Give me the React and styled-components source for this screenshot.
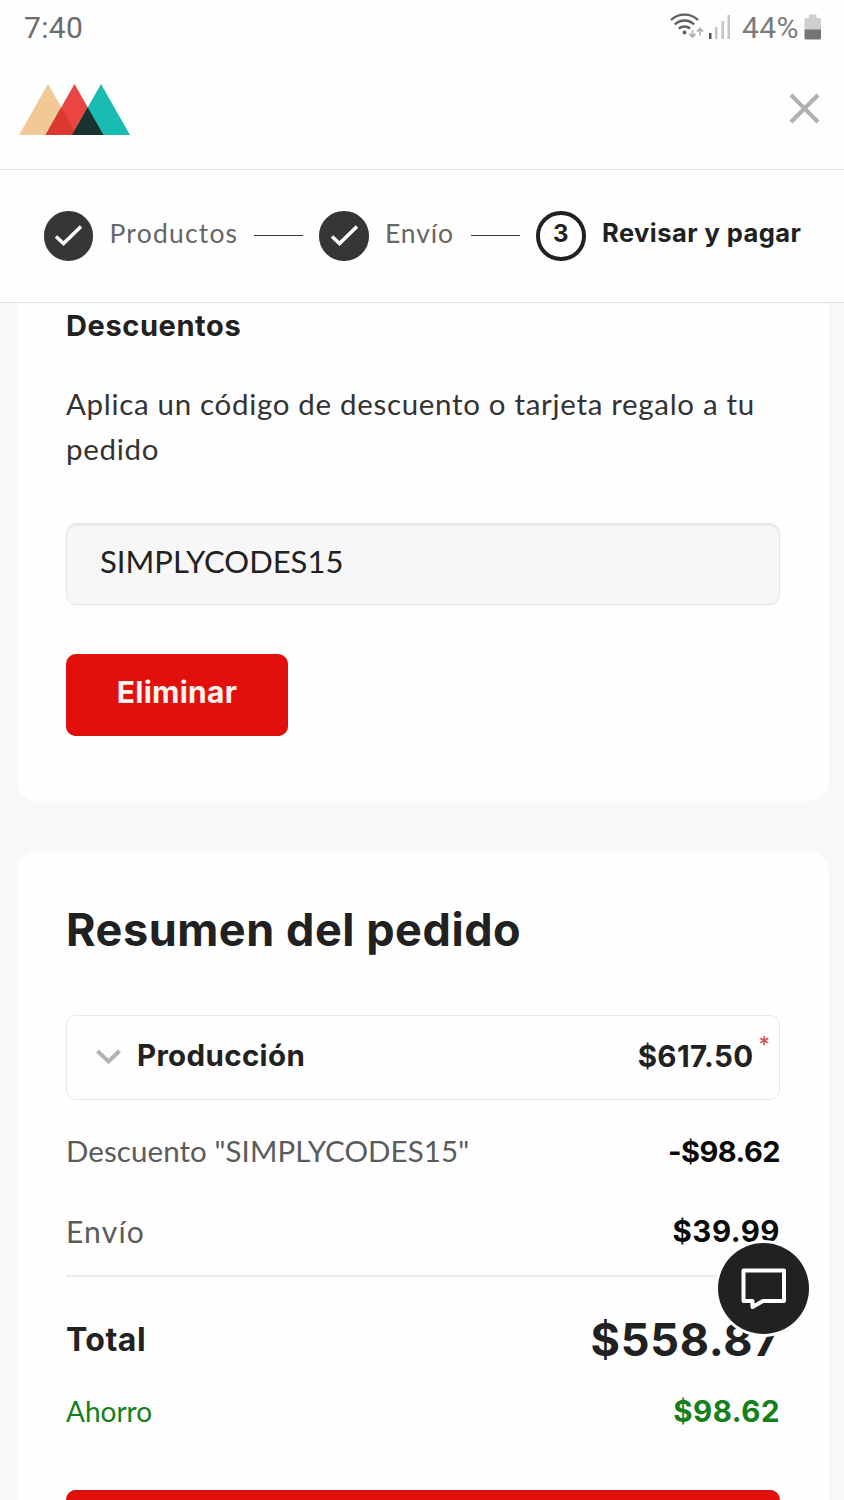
import React, { useState } from 'react';
import styled, { createGlobalStyle } from 'styled-components';

const headingFont = "Inter, 'Liberation Sans', sans-serif";

const GlobalStyle = createGlobalStyle`
    * {
        box-sizing: border-box;
    }

    body {
        margin: 0;
        background: #f8f8f8;
        color: #212121;
        font-family: Lato, 'Liberation Sans', sans-serif;
        overflow: hidden;
    }
`;

const Page = styled.div`
    width: 844px;
    height: 1500px;
    display: flex;
    flex-direction: column;
    overflow: hidden;
`;

// Phone status bar
const StatusBar = styled.div`
    height: 54px;
    flex-shrink: 0;
    padding: 0 22px 0 24px;
    display: flex;
    align-items: center;
    justify-content: space-between;
    background: #fefefe;
    color: #6c6c6c;
    font-family: Roboto, sans-serif;
    font-size: 30px;
    letter-spacing: 0.3px;
`;

const StatusIcons = styled.div`
    display: flex;
    align-items: center;
    color: #7b7b7b;

    svg {
        display: block;
    }
`;

const BatteryText = styled.span`
    margin: 0 5px 0 10px;
    letter-spacing: 0.4px;
`;

const Header = styled.header`
    height: 116px;
    flex-shrink: 0;
    padding: 0 24px 6px 18px;
    display: flex;
    align-items: center;
    justify-content: space-between;
    background: #fefefe;
    border-bottom: 1px solid #e3e3e3;
`;

const IconButton = styled.button`
    padding: 0;
    border: 0;
    background: none;
    line-height: 0;
`;

// Checkout steps
const Steps = styled.nav`
    height: 133px;
    flex-shrink: 0;
    padding-left: 43.5px;
    display: flex;
    align-items: center;
    gap: 16.5px;
    background: #fefefe;
    border-bottom: 1px solid #e0e0e0;
`;

const StepCircle = styled.span`
    width: 49.5px;
    height: 49.5px;
    flex-shrink: 0;
    display: flex;
    align-items: center;
    justify-content: center;
    border-radius: 50%;
    border: 4px solid ${({ $done }) => ($done ? '#363636' : '#212121')};
    background: ${({ $done }) => ($done ? '#363636' : '#fefefe')};
    font-family: ${headingFont};
    font-size: 24px;
    font-weight: 700;
    line-height: 30px;
    padding-bottom: ${({ $done }) => ($done ? '0' : '5px')};
`;

const StepLabel = styled.span`
    width: ${({ $width }) => $width}px;
    padding-bottom: 7px;
    font-family: ${({ $active }) => ($active ? headingFont : 'inherit')};
    font-size: ${({ $active }) => ($active ? 25.5 : 26.5)}px;
    line-height: 32px;
    white-space: nowrap;
    font-weight: ${({ $active }) => ($active ? 700 : 400)};
    color: ${({ $active }) => ($active ? '#212121' : '#666')};
    letter-spacing: ${({ $spacing }) => $spacing || 0}px;
`;

const StepLine = styled.span`
    width: 49px;
    height: 1px;
    margin-bottom: 1px;
    background: #363636;
`;

// Cards
const Content = styled.main`
    flex: 1;
    min-height: 0;
    padding: 0 15px 0 17px;
    display: flex;
    flex-direction: column;
    gap: 50px;
`;

const Card = styled.section`
    flex-shrink: 0;
    height: ${({ $height }) => $height}px;
    padding: ${({ $top }) => $top}px 49px 0;
    display: flex;
    flex-direction: column;
    background: #fefefe;
    border-radius: ${({ $joined }) => ($joined ? '0 0 20px 20px' : '20px 20px 0 0')};
`;

const SectionTitle = styled.h3`
    margin: 0;
    font-family: ${headingFont};
    font-size: 29px;
    line-height: 36px;
    font-weight: 700;
    letter-spacing: 0.6px;
`;

const Description = styled.p`
    margin: 37px 0 52px;
    font-size: 29.5px;
    line-height: 45px;
    color: #333;
    letter-spacing: 0.68px;
`;

const CodeInput = styled.input`
    width: 714px;
    height: 82px;
    padding: 0 33px 7px;
    border: 1.5px solid #e4e4e4;
    border-radius: 10px;
    background: #f7f7f7;
    box-shadow: inset 0 2px 1px #e9e9e9;
    outline: none;
    color: #212121;
    font-family: inherit;
    font-size: 31px;
`;

const RemoveButton = styled.button`
    width: 222px;
    height: 82px;
    margin-top: 49px;
    padding: 0 0 7px;
    border: 0;
    border-radius: 10px;
    background: #e30f0b;
    box-shadow: inset 0 -1px 1px #c81814;
    color: #fff3f0;
    font-family: ${headingFont};
    font-size: 30px;
    font-weight: 700;
    letter-spacing: 0.25px;
`;

const SummaryTitle = styled.h2`
    margin: 0;
    font-family: ${headingFont};
    font-size: 45px;
    line-height: 56px;
    font-weight: 700;
    letter-spacing: 0.55px;
`;

const ProductionBox = styled.div`
    height: 85px;
    margin-top: 57px;
    padding: 0 9px 5px 29px;
    display: flex;
    align-items: center;
    border: 1.5px solid #e9e9e9;
    border-radius: 10px;

    svg {
        margin-top: 4px;
    }
`;

const ProductionLabel = styled.span`
    flex: 1;
    margin-left: 16px;
    font-family: ${headingFont};
    font-size: 29.5px;
    line-height: 40px;
    font-weight: 700;
    letter-spacing: 0.35px;
`;

const Asterisk = styled.span`
    align-self: flex-start;
    margin: 14px 0 0 5px;
    color: #d9534f;
    font-size: 27px;
    font-weight: 700;
    line-height: 32px;
`;

const Row = styled.div`
    height: ${({ $height }) => $height}px;
    display: flex;
    align-items: center;
    justify-content: space-between;
`;

const RowLabel = styled.span`
    font-family: ${({ $bold }) => ($bold ? headingFont : 'inherit')};
    font-size: ${({ $size }) => $size || 29.5}px;
    font-weight: ${({ $bold }) => ($bold ? 700 : 400)};
    color: ${({ $color }) => $color || '#5b5b5b'};
    letter-spacing: ${({ $spacing }) => $spacing || 0}px;
`;

const Amount = styled.span`
    padding-top: 1px;
    font-family: ${headingFont};
    font-size: ${({ $size }) => $size || 29.5}px;
    font-weight: 700;
    color: ${({ $color }) => $color || '#0b0b0b'};
    letter-spacing: ${({ $spacing }) => $spacing || 0}px;
`;

const Divider = styled.hr`
    width: 100%;
    height: 2px;
    margin: 15px 0 16px;
    border: 0;
    background: #ececec;
`;

const PayButton = styled.button`
    height: 82px;
    flex-shrink: 0;
    margin-top: 54px;
    border: 0;
    border-radius: 10px;
    background: #e30f0b;
    box-shadow: inset 0 1px 1px #c81814;
`;

// Chat launcher floats above the summary
const ChatButton = styled.button`
    position: fixed;
    left: 718px;
    top: 1243px;
    width: 91px;
    height: 91px;
    padding: 0;
    border: 0;
    border-radius: 50%;
    background: #212121;
    box-shadow: 0 0 0 3px #fefefe;
    line-height: 0;
`;

const WifiIcon = () => (
    <svg width="38" height="28" viewBox="0 0 38 28" fill="none" stroke="#5f5f5f" strokeWidth="2.4">
        <path d="M1 7C8.500 -0.200 20.500 -0.200 28 7" />
        <path d="M4.800 11.500C10.500 6.100 18.500 6.100 24.200 11.500" />
        <path d="M8.800 15.700C12 12.800 17 12.800 20.200 15.700" />
        <circle cx="14.500" cy="19.500" r="1.900" fill="#5f5f5f" stroke="none" />
        <path d="M22.500 17V24M19.500 21L22.500 24L25.500 21" stroke="#b4b4b4" strokeWidth="1.800" />
        <path d="M30 22.500V15.500M27 18.500L30 15.500L33 18.500" stroke="#b4b4b4" strokeWidth="1.800" />
    </svg>
);

const SignalIcon = () => (
    <svg width="24" height="26" viewBox="0 0 24 26" fill="#c4c4c4">
        <rect x="1" y="19" width="2.500" height="6" fill="#555" />
        <rect x="7" y="13" width="2.500" height="12" />
        <rect x="13.500" y="7" width="2.500" height="18" />
        <rect x="19.500" y="1" width="2.500" height="24" />
    </svg>
);

const BatteryIcon = () => (
    <svg width="18" height="26" viewBox="0 0 18 26">
        <path d="M5 0.500H12.500V4H17V16H0.500V4H5Z" fill="#cfcfcf" />
        <path d="M0.500 15.500H17V24Q17 25.500 15.500 25.500H2Q0.500 25.500 0.500 24Z" fill="#747474" />
    </svg>
);

const Logo = () => (
    <svg width="113" height="52" viewBox="0 0 113 52">
        <path d="M30 1L59 52H1Z" fill="#f0c996" />
        <path d="M56.500 1L85.500 52H27.500Z" fill="#e94542" />
        <path d="M83 1L112 52H54Z" fill="#19bcb3" />
        <path d="M43.200 24.300L59 52H27.500Z" fill="#db382f" />
        <path d="M69.700 24.300L85.500 52H54Z" fill="#1b332f" />
    </svg>
);

const CloseIcon = () => (
    <svg width="31" height="31" viewBox="0 0 31 31" stroke="#b0b0b0" strokeWidth="4">
        <path d="M2 2L29 29M29 2L2 29" />
    </svg>
);

const CheckIcon = () => (
    <svg width="28" height="22" viewBox="0 0 28 22" fill="none" stroke="#fff" strokeWidth="3.500">
        <path d="M2 11.500L9.500 18.500L27 1.500" />
    </svg>
);

const ChevronIcon = () => (
    <svg width="25" height="16" viewBox="0 0 25 16" fill="none" stroke="#b3b3b3" strokeWidth="4">
        <path d="M1.500 2L12.500 12.500L23.500 2" />
    </svg>
);

const ChatIcon = () => (
    <svg width="46" height="42" viewBox="0 0 46 42" fill="none" stroke="#fff" strokeWidth="4" strokeLinejoin="round">
        <path d="M2.500 2.500H43V33H22L11.500 39V33H2.500Z" />
    </svg>
);

function App() {
    const [code, setCode] = useState('SIMPLYCODES15');

    return (
        <Page>
            <GlobalStyle />
            <StatusBar>
                <span>7:40</span>
                <StatusIcons>
                    <WifiIcon />
                    <SignalIcon />
                    <BatteryText>44%</BatteryText>
                    <BatteryIcon />
                </StatusIcons>
            </StatusBar>

            <Header>
                <Logo />
                <IconButton aria-label="Cerrar"><CloseIcon /></IconButton>
            </Header>

            <Steps>
                <StepCircle $done><CheckIcon /></StepCircle>
                <StepLabel $width={127.5} $spacing={1.2}>Productos</StepLabel>
                <StepLine />
                <StepCircle $done><CheckIcon /></StepCircle>
                <StepLabel $width={69} $spacing={0.9}>Envío</StepLabel>
                <StepLine />
                <StepCircle>3</StepCircle>
                <StepLabel $width={200} $spacing={0.45} $active>Revisar y pagar</StepLabel>
            </Steps>

            <Content>
                {/* Discount code */}
                <Card $joined $height={498} $top={5}>
                    <SectionTitle>Descuentos</SectionTitle>
                    <Description>Aplica un código de descuento o tarjeta regalo a tu pedido</Description>
                    <CodeInput value={code} onChange={(e) => setCode(e.target.value)} />
                    <RemoveButton onClick={() => setCode('')}>Eliminar</RemoveButton>
                </Card>

                {/* Order summary */}
                <Card $height={800} $top={51}>
                    <SummaryTitle>Resumen del pedido</SummaryTitle>
                    <ProductionBox>
                        <ChevronIcon />
                        <ProductionLabel>Producción</ProductionLabel>
                        <Amount $spacing={0.4} $color="#212121">$617.50</Amount>
                        <Asterisk>*</Asterisk>
                    </ProductionBox>
                    <Row $height={101}>
                        <RowLabel $spacing={0.08}>Descuento "SIMPLYCODES15"</RowLabel>
                        <Amount $size={29} $spacing={-0.5}>-$98.62</Amount>
                    </Row>
                    <Row $height={59}>
                        <RowLabel $size={30} $spacing={1.2}>Envío</RowLabel>
                        <Amount $spacing={0.5}>$39.99</Amount>
                    </Row>
                    <Divider />
                    <Row $height={92}>
                        <RowLabel $size={32} $spacing={0.5} $color="#212121" $bold>Total</RowLabel>
                        <Amount $size={45} $spacing={0.7} $color="#212121">$558.87</Amount>
                    </Row>
                    <Row $height={51}>
                        <RowLabel $size={28} $color="#14801a">Ahorro</RowLabel>
                        <Amount $spacing={0.5} $color="#14801a">$98.62</Amount>
                    </Row>
                    <PayButton aria-label="Pagar" />
                </Card>
            </Content>

            <ChatButton aria-label="Chat"><ChatIcon /></ChatButton>
        </Page>
    );
}

export default App;
